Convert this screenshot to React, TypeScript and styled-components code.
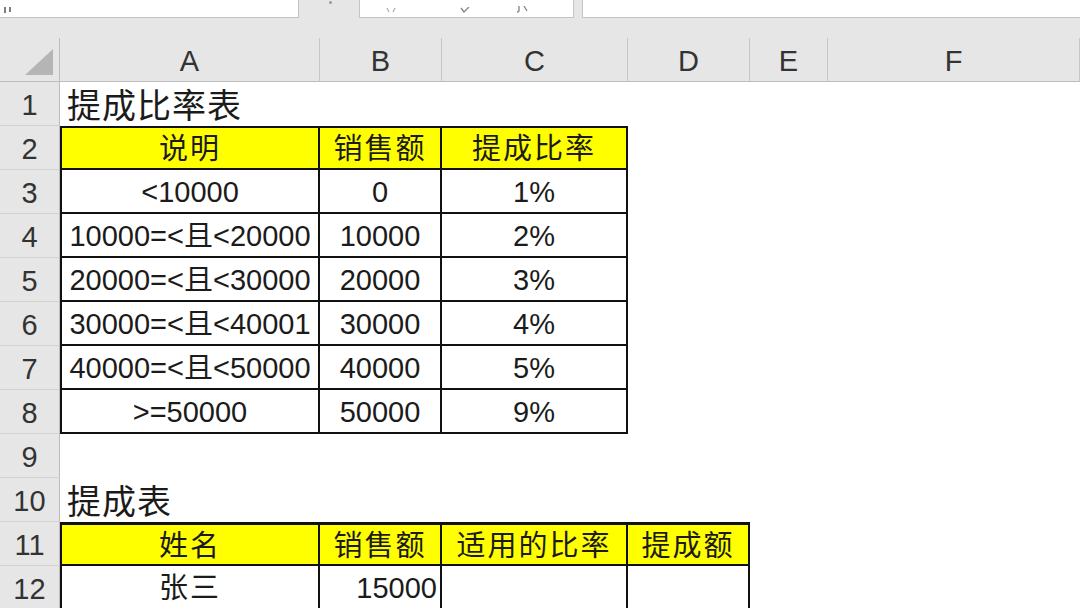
import React from 'react'
import styled, { createGlobalStyle } from 'styled-components'

const GlobalStyle = createGlobalStyle`
  html, body {
    margin: 0;
    padding: 0;
    background: #ffffff;
  }
  body {
    width: 1080px;
    height: 608px;
    overflow: hidden;
    font-family: "Liberation Sans", "Noto Sans CJK SC", sans-serif;
  }
`

type Align = 'left' | 'center' | 'right'

type CellSpec = {
  text?: string
  fill?: string
  align?: Align
  title?: boolean
  // border widths: top, right, bottom, left
  edges?: [number, number, number, number]
}

const YELLOW = '#ffff00'

// 上の数式バー（半分切れてる）
const FormulaBar = styled.div`
  height: 38px;
  background: #e6e6e6;
  display: flex;
  align-items: flex-start;
`

const BarBox = styled.div<{ $w: string; $ml?: number }>`
  width: ${(p) => p.$w};
  margin-left: ${(p) => p.$ml ?? 0}px;
  height: 18px;
  box-sizing: border-box;
  background: #ffffff;
  border: 1px solid #c4c4c4;
  border-top: none;
  display: flex;
  align-items: flex-end;
  overflow: hidden;
  color: #7a7a7a;
`

const IconStub = styled.svg<{ $ml: number }>`
  margin-left: ${(p) => p.$ml}px;
  margin-bottom: 4px;
  flex: none;
`

const Dot = styled.span`
  margin-left: 30px;
  width: 3px;
  height: 3px;
  margin-top: 1px;
  background: #9a9a9a;
  border-radius: 50%;
`

const Sheet = styled.div`
  display: grid;
  grid-template-columns: 60px 260px 122px 186px 122px 78px 1fr;
  grid-auto-rows: 44px;
  height: 570px;
  overflow: hidden;
`

const Corner = styled.div`
  background: #e6e6e6;
  border-right: 1px solid #bdbdbd;
  border-bottom: 1px solid #bdbdbd;
  display: flex;
  align-items: flex-end;
  justify-content: flex-end;
  padding: 0 6px 6px 0;
`

const ColHead = styled.div`
  background: #e6e6e6;
  border-right: 1px solid #c6c6c6;
  border-bottom: 1px solid #bdbdbd;
  display: flex;
  align-items: center;
  justify-content: center;
  padding-top: 4px;
  font-size: 29px;
  color: #333333;
`

const RowHead = styled.div`
  background: #e6e6e6;
  border-right: 1px solid #bdbdbd;
  border-bottom: 1px solid #d2d2d2;
  display: flex;
  align-items: center;
  justify-content: center;
  padding-top: 3px;
  font-size: 29px;
  color: #333333;
`

const Cell = styled.div<{
  $fill?: string
  $align: Align
  $title?: boolean
  $edges: [number, number, number, number]
}>`
  position: relative;
  background: ${(p) => p.$fill ?? '#ffffff'};
  border-style: solid;
  border-color: #111111;
  border-width: ${(p) => p.$edges.map((e) => `${e}px`).join(' ')};
  display: flex;
  align-items: center;
  justify-content: ${(p) =>
    p.$align === 'left' ? 'flex-start' : p.$align === 'right' ? 'flex-end' : 'center'};
  padding: ${(p) => (p.$align === 'left' ? '0 0 0 7px' : p.$align === 'right' ? '0 3px 0 0' : '0')};
  padding-top: 3px;
  font-size: ${(p) => (p.$title ? 34 : 29)}px;
  line-height: 1;
  letter-spacing: ${(p) => (p.$title ? 1 : 0)}px;
  color: #1b1b1b;
  white-space: nowrap;
  overflow: visible;
  z-index: ${(p) => (p.$title ? 1 : 0)};
`

const CjkText = styled.span`
  letter-spacing: 2px;
`

const hasCjk = (s: string) => /[\u4e00-\u9fff]/.test(s)

const columns = ['A', 'B', 'C', 'D', 'E', 'F']

// 表のデータ
const rateTable = [
  ['说明', '销售额', '提成比率'],
  ['<10000', '0', '1%'],
  ['10000=<且<20000', '10000', '2%'],
  ['20000=<且<30000', '20000', '3%'],
  ['30000=<且<40001', '30000', '4%'],
  ['40000=<且<50000', '40000', '5%'],
  ['>=50000', '50000', '9%'],
]

const bonusTable = [
  ['姓名', '销售额', '适用的比率', '提成额'],
  ['张三', '15000', '', ''],
]

function buildRows(): CellSpec[][] {
  const rows: CellSpec[][] = []
  const blank = (): CellSpec[] => columns.map(() => ({}))

  const r1 = blank()
  r1[0] = { text: '提成比率表', title: true, align: 'left' }
  rows.push(r1)

  rateTable.forEach((vals, i) => {
    const r = blank()
    vals.forEach((v, c) => {
      r[c] = {
        text: v,
        fill: i === 0 ? YELLOW : undefined,
        edges: [i === 0 ? 2 : 0, 2, 2, c === 0 ? 2 : 0],
      }
    })
    rows.push(r)
  })

  rows.push(blank())

  const r10 = blank()
  r10[0] = { text: '提成表', title: true, align: 'left' }
  rows.push(r10)

  bonusTable.forEach((vals, i) => {
    const r = blank()
    vals.forEach((v, c) => {
      r[c] = {
        text: v,
        fill: i === 0 ? YELLOW : undefined,
        align: i === 1 && c === 1 ? 'right' : 'center',
        edges: [i === 0 ? 3 : 0, 2, 2, c === 0 ? 2 : 0],
      }
    })
    rows.push(r)
  })

  return rows
}

const rows = buildRows()

function renderText(text?: string, title?: boolean) {
  if (!text) return null
  if (!title && hasCjk(text) && !/\d/.test(text)) return <CjkText>{text}</CjkText>
  return text
}

export default function App() {
  return (
    <>
      <GlobalStyle />
      <FormulaBar>
        <BarBox $w="299px" style={{ borderLeft: 'none' }}>
          {/* name box: only the tail of the dropdown glyph is visible */}
          <IconStub $ml={4} width="8" height="6" viewBox="0 0 8 6">
            <path d="M1 0 L1 6 M6 0 L6 5" stroke="#555" strokeWidth="1.5" fill="none" />
          </IconStub>
        </BarBox>
        <Dot />
        <BarBox $w="215px" $ml={27}>
          {/* bottoms of the cancel / enter / fx buttons */}
          <IconStub $ml={26} width="10" height="5" viewBox="0 0 10 5">
            <path d="M1 0 L3 4 M9 0 L7 4" stroke="#b0b0b0" strokeWidth="1.3" fill="none" />
          </IconStub>
          <IconStub $ml={64} width="10" height="6" viewBox="0 0 10 6">
            <path d="M1 1 L4 5 L9 0" stroke="#8a8a8a" strokeWidth="1.4" fill="none" />
          </IconStub>
          <IconStub $ml={46} width="12" height="7" viewBox="0 0 12 7">
            <path d="M3 0 L3 4 Q3 6 1 6 M8 0 L11 5" stroke="#8a8a8a" strokeWidth="1.4" fill="none" />
          </IconStub>
        </BarBox>
        <BarBox $w="auto" $ml={8} style={{ flex: 1, borderRight: 'none' }} />
      </FormulaBar>
      <Sheet>
        <Corner>
          <svg width="28" height="26" viewBox="0 0 28 26">
            <polygon points="28,0 28,26 0,26" fill="#b5b5b5" />
          </svg>
        </Corner>
        {columns.map((c) => (
          <ColHead key={c}>{c}</ColHead>
        ))}
        {rows.map((cells, ri) => (
          <React.Fragment key={ri}>
            <RowHead>{ri + 1}</RowHead>
            {cells.map((cell, ci) => (
              <Cell
                key={ci}
                $fill={cell.fill}
                $align={cell.align ?? 'center'}
                $title={cell.title}
                $edges={cell.edges ?? [0, 0, 0, 0]}
              >
                {renderText(cell.text, cell.title)}
              </Cell>
            ))}
          </React.Fragment>
        ))}
      </Sheet>
    </>
  )
}
